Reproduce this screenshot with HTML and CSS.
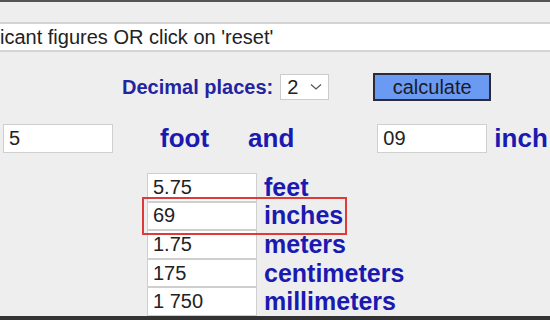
FILE: index.html
```html
<!DOCTYPE html>
<html lang="en">
<head>
    <meta charset="UTF-8">
    <title>Feet and inches converter</title>
    <link rel="stylesheet" href="styles.css">
</head>
<body>
    <div class="frame">
        <div class="message">icant figures OR click on 'reset'</div>

        <div class="controls">
            <span class="label">Decimal places:</span>
            <div class="select-box">
                <span>2</span>
                <svg width="12" height="8" viewBox="0 0 12 8"><path d="M1 1.5 L6 6 L11 1.5" fill="none" stroke="#555" stroke-width="1.2"/></svg>
            </div>
            <button class="calc-btn">calculate</button>
        </div>

        <div class="entry-row">
            <input class="field field-feet" type="text" value="5">
            <span class="big-label foot">foot</span>
            <span class="big-label and">and</span>
            <input class="field field-inch" type="text" value="09">
            <span class="big-label">inch</span>
        </div>

        <div class="results">
            <div class="result-row"><input class="field" type="text" value="5.75"><span class="unit">feet</span></div>
            <div class="result-row highlight"><input class="field" type="text" value="69"><span class="unit">inches</span></div>
            <div class="result-row"><input class="field" type="text" value="1.75"><span class="unit">meters</span></div>
            <div class="result-row"><input class="field" type="text" value="175"><span class="unit">centimeters</span></div>
            <div class="result-row"><input class="field" type="text" value="1 750"><span class="unit">millimeters</span></div>
        </div>
    </div>
</body>
</html>
```

FILE: styles.css
```css
* {
    margin: 0;
    padding: 0;
    box-sizing: border-box;
}

body {
    background-color: #eeeeee;
    font-family: "Liberation Sans", Arial, sans-serif;
    width: 550px;
    height: 320px;
    overflow: hidden;
}

.frame {
    height: 320px;
    border-top: 2px solid #555;
    border-bottom: 4px solid #333;
    overflow: hidden;
}

.message {
    margin-top: 20px;
    height: 30px;
    background: #fff;
    border-top: 2px solid #d4d4d4;
    border-bottom: 2px solid #d4d4d4;
    font-size: 20px;
    line-height: 27px;
    color: #222;
    white-space: nowrap;
}

.controls {
    display: flex;
    align-items: center;
    margin-top: 21px;
    padding-left: 122px;
    height: 28px;
}

.label {
    font-size: 20px;
    font-weight: bold;
    color: #2424a0;
}

.select-box {
    display: flex;
    align-items: center;
    justify-content: space-between;
    margin-left: 7px;
    width: 49px;
    height: 26px;
    padding: 0 6px 0 6px;
    background: #fff;
    border: 1px solid #ccc;
    font-size: 20px;
    color: #222;
}

.calc-btn {
    margin-left: 44px;
    width: 118px;
    height: 28px;
    background-color: #6b9af3;
    border: 2px solid #2a2a3a;
    font-family: inherit;
    font-size: 20px;
    color: #1a1a2a;
}

.entry-row {
    display: flex;
    align-items: center;
    margin-top: 22px;
    padding-left: 3px;
    height: 30px;
}

.field {
    width: 110px;
    height: 29px;
    border: 1px solid #cfcfcf;
    background: #fff;
    font-family: inherit;
    font-size: 20px;
    color: #222;
    padding-left: 5px;
    outline: none;
}

.big-label {
    font-size: 26px;
    font-weight: bold;
    color: #1a1ab0;
}

.foot {
    margin-left: 47px;
}

.and {
    margin-left: 39px;
}

.field-inch {
    margin-left: 83px;
    margin-right: 7px;
}

.results {
    margin-top: 20px;
    padding-left: 147px;
}

.result-row {
    display: flex;
    align-items: center;
    width: 195px;
    height: 28.6px;
    white-space: nowrap;
}

.result-row .field {
    height: 28.6px;
}

.unit {
    margin-left: 7px;
    font-size: 25px;
    font-weight: bold;
    color: #1a1ab0;
}

.highlight {
    outline: 2px solid #dd3b3b;
    outline-offset: 3px;
}
```
